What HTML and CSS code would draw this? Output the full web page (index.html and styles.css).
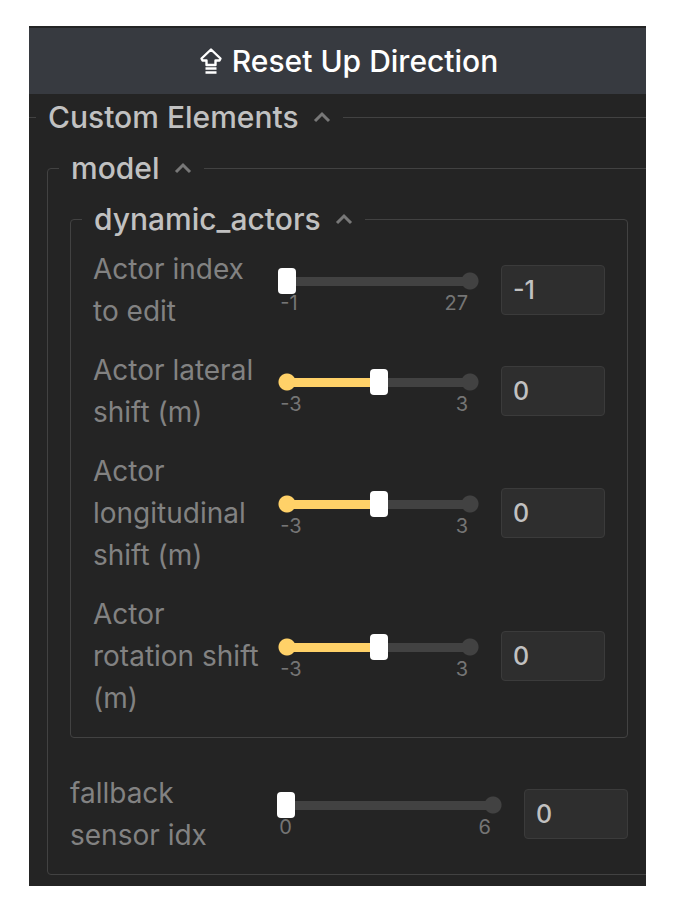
FILE: index.html
```html
<!DOCTYPE html>
<html lang="en">
<head>
  <meta charset="utf-8">
  <meta name="viewport" content="width=device-width, initial-scale=1">
  <title>Control panel</title>
  <link rel="stylesheet" href="styles.css">
</head>
<body>
  <main class="panel">
    <div class="content">
      <button class="reset" type="button">
        <svg class="reset-icon" viewBox="0 0 22 28" aria-hidden="true">
          <path d="M11 2.500 L20.500 11.500 L19.500 13.500 H15.500 V18 H6.500 V13.500 H2.500 L1.500 11.500 Z"/>
          <path d="M5.500 21.500 H16.500 M5.500 25.500 H16.500"/>
        </svg>
        Reset Up Direction
      </button>

      <fieldset class="group root">
        <legend><button class="toggle" type="button" aria-expanded="true">Custom Elements
          <svg class="chevron" viewBox="0 0 18 12" aria-hidden="true"><path d="M2 10 L9 3 L16 10"/></svg></button></legend>

        <fieldset class="group model">
          <legend><button class="toggle" type="button" aria-expanded="true">model
            <svg class="chevron" viewBox="0 0 18 12" aria-hidden="true"><path d="M2 10 L9 3 L16 10"/></svg></button></legend>

          <fieldset class="group actors">
            <legend><button class="toggle" type="button" aria-expanded="true">dynamic_actors
              <svg class="chevron" viewBox="0 0 18 12" aria-hidden="true"><path d="M2 10 L9 3 L16 10"/></svg></button></legend>
            <div class="rows">
              <div class="row">
                <label for="index">Actor index to edit</label>
                <div class="slider">
                  <input id="index" class="range" type="range" min="-1" max="27" value="-1" style="--fill: 0%">
                  <div class="marks"><span>-1</span><span>27</span></div>
                </div>
                <input class="number" type="text" inputmode="numeric" value="-1" aria-label="Actor index to edit value">
              </div>
              <div class="row">
                <label for="lateral">Actor lateral shift (m)</label>
                <div class="slider">
                  <input id="lateral" class="range filled" type="range" min="-3" max="3" value="0" style="--fill: 50%">
                  <div class="marks"><span>-3</span><span>3</span></div>
                </div>
                <input class="number" type="text" inputmode="numeric" value="0" aria-label="Actor lateral shift value">
              </div>
              <div class="row">
                <label for="longitudinal">Actor longitudinal shift (m)</label>
                <div class="slider">
                  <input id="longitudinal" class="range filled" type="range" min="-3" max="3" value="0" style="--fill: 50%">
                  <div class="marks"><span>-3</span><span>3</span></div>
                </div>
                <input class="number" type="text" inputmode="numeric" value="0" aria-label="Actor longitudinal shift value">
              </div>
              <div class="row">
                <label for="rotation">Actor rotation shift (m)</label>
                <div class="slider">
                  <input id="rotation" class="range filled" type="range" min="-3" max="3" value="0" style="--fill: 50%">
                  <div class="marks"><span>-3</span><span>3</span></div>
                </div>
                <input class="number" type="text" inputmode="numeric" value="0" aria-label="Actor rotation shift value">
              </div>
            </div>
          </fieldset>

          <div class="row sensor">
            <label for="sensor">fallback sensor idx</label>
            <div class="slider">
              <input id="sensor" class="range" type="range" min="0" max="6" value="0" style="--fill: 0%">
              <div class="marks"><span>0</span><span>6</span></div>
            </div>
            <input class="number" type="text" inputmode="numeric" value="0" aria-label="fallback sensor idx value">
          </div>
        </fieldset>
      </fieldset>
    </div>
  </main>
</body>
</html>
```

FILE: styles.css
```css
* {
  box-sizing: border-box;
}

body {
  margin: 0;
  background: #fff;
  font-family: Inter, "Liberation Sans", sans-serif;
}

button,
input {
  margin: 0;
  font-family: inherit;
}

.panel {
  margin: 26px 35px 19px 29px;
  padding-top: 2px;
  overflow: hidden;
  background: #242424;
}

/* The content is wider than the panel, which clips both of its sides. */
.content {
  margin: 0 -28px 0 -5px;
}

.reset {
  display: flex;
  align-items: center;
  justify-content: center;
  gap: 10px;
  width: 100%;
  height: 66px;
  padding: 0;
  border: 0;
  border-radius: 4px;
  background: #373a40;
  color: #fff;
  font-size: 30px;
  font-weight: 500;
}

.reset-icon {
  width: 22px;
  height: 28px;
  fill: none;
  stroke: currentColor;
  stroke-width: 2.4;
  stroke-linejoin: round;
}

.group {
  min-width: 0;
  margin: 0;
  padding: 17px 22px 18px;
  border: 1px solid #424242;
  border-radius: 4px;
}

.root {
  margin-top: 6px;
  padding-bottom: 11px;
  border-bottom: 0;
}

.actors {
  padding-top: 12px;
}

legend {
  margin-left: -11px;
  padding: 0 12px;
}

.toggle {
  display: flex;
  align-items: center;
  gap: 14px;
  height: 34px;
  padding: 0;
  border: 0;
  background: none;
  color: #c1c1c1;
  font-size: 30px;
  font-weight: 500;
}

.chevron {
  width: 18px;
  height: 12px;
  fill: none;
  stroke: #787878;
  stroke-width: 3;
}

.rows {
  display: grid;
  gap: 17px;
}

.row {
  display: grid;
  grid-template-columns: minmax(0, 12fr) minmax(0, 13fr) 126px;
  align-items: center;
}

.sensor {
  margin-top: 34px;
}

label {
  padding-right: 18px;
  color: #828282;
  font-size: 28px;
  line-height: 42px;
}

.range {
  --bar: #424242;
  --start: #424242;
  display: block;
  appearance: none;
  width: 100%;
  height: 26px;
  background:
    radial-gradient(circle at 9px 50%, var(--start) 8px, transparent 9px),
    radial-gradient(circle at calc(100% - 9px) 50%, var(--bar) 8px, transparent 9px),
    linear-gradient(to right, var(--start) var(--fill), var(--bar) var(--fill)) center / calc(100% - 18px) 9px no-repeat;
}

.filled {
  --start: #ffd168;
}

.range::-webkit-slider-thumb {
  appearance: none;
  width: 18px;
  height: 26px;
  border: 0;
  border-radius: 4px;
  background: #fff;
}

.range::-moz-range-thumb {
  width: 18px;
  height: 26px;
  border: 0;
  border-radius: 4px;
  background: #fff;
}

.marks {
  display: flex;
  justify-content: space-between;
  padding: 0 11px 0 2px;
  color: #757575;
  font-size: 20px;
  line-height: 18px;
}

.number {
  justify-self: end;
  width: 104px;
  height: 50px;
  padding: 0 11px;
  border: 1px solid #3b3b3b;
  border-radius: 4px;
  background: #2e2e2e;
  color: #c1c1c1;
  font-size: 25px;
  font-weight: 500;
}
```
